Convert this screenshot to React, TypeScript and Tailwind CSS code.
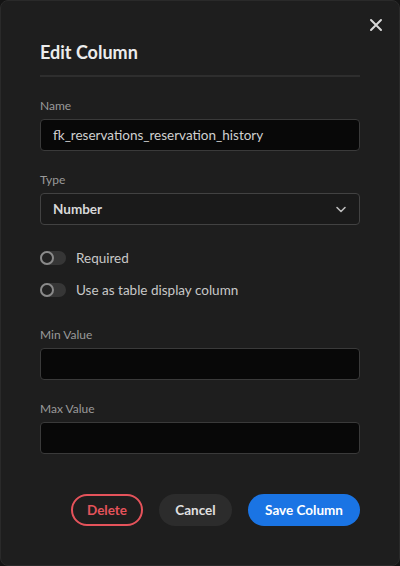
import React from 'react'

const font = { fontFamily: 'Lato, "Noto Sans", sans-serif' }

const Toggle = ({ label }: { label: string }) => (
  <div className="flex h-[20px] items-center gap-[10px]">
    <span className="relative h-[14px] w-[26px] rounded-full bg-[#363636]">
      <span className="absolute left-0 top-0 h-[14px] w-[14px] rounded-full border-2 border-[#8a8a8a] bg-[#222]" />
    </span>
    <span className="text-[13.5px] leading-[20px] text-[#c8c8c8]">{label}</span>
  </div>
)

const Label = ({ children }: { children: React.ReactNode }) => (
  <label className="block h-[16px] text-[12px] leading-[16px] text-[#9a9a9a]">{children}</label>
)

const Input = ({ value }: { value?: string }) => (
  <div className="mt-[5px] flex h-[32px] items-center rounded-[4px] border border-[#3a3a3a] bg-[#080808] px-[12px] text-[13.5px] text-[#d0d0d0]">
    {value}
  </div>
)

const App = () => {
  return (
    <div className="h-[566px] w-[400px] bg-[#141414]" style={font}>
      <div className="relative flex h-full flex-col rounded-[8px] border border-[#2a2a2a] bg-[#1e1e1e] px-[39px] pt-[39px]">
        <button className="absolute right-[16px] top-[17px] text-[#d8d8d8]">
          <svg width="14" height="14" viewBox="0 0 14 14" fill="none" stroke="currentColor" strokeWidth="2" strokeLinecap="round">
            <path d="M2 2L12 12M12 2L2 12" />
          </svg>
        </button>

        <h2 className="h-[24px] text-[18px] font-bold leading-[24px] text-[#ececec]">Edit Column</h2>
        <div className="mt-[11px] h-[2px] bg-[#2e2e2e]" />

        <div className="mt-[21px]">
          <Label>Name</Label>
          <Input value="fk_reservations_reservation_history" />
        </div>

        <div className="mt-[21px]">
          <Label>Type</Label>
          <div className="mt-[5px] flex h-[32px] items-center justify-between rounded-[4px] border border-[#424242] bg-[#1a1a1a] pl-[12px] pr-[11px]">
            <span className="text-[13.5px] font-bold text-[#d8d8d8]">Number</span>
            <svg width="14" height="14" viewBox="0 0 14 14" fill="none" stroke="#bdbdbd" strokeWidth="1.6" strokeLinecap="round" strokeLinejoin="round">
              <path d="M3 5.5L7 9.5l4-4" />
            </svg>
          </div>
        </div>

        <div className="mt-[23px] flex flex-col gap-[12px]">
          <Toggle label="Required" />
          <Toggle label="Use as table display column" />
        </div>

        <div className="mt-[27px]">
          <Label>Min Value</Label>
          <Input />
        </div>
        <div className="mt-[21px]">
          <Label>Max Value</Label>
          <Input />
        </div>

        <div className="mt-[40px] flex justify-end gap-[16px]">
          <button className="h-[32px] w-[72px] rounded-full border-2 border-[#e5535b] text-[13.5px] font-bold text-[#e5535b]">
            Delete
          </button>
          <button className="h-[32px] w-[73px] rounded-full bg-[#2c2c2c] text-[13.5px] font-bold text-[#e0e0e0]">
            Cancel
          </button>
          <button className="h-[32px] w-[112px] rounded-full bg-[#1a74e4] text-[13.5px] font-bold text-white">
            Save Column
          </button>
        </div>
      </div>
    </div>
  )
}

export default App
